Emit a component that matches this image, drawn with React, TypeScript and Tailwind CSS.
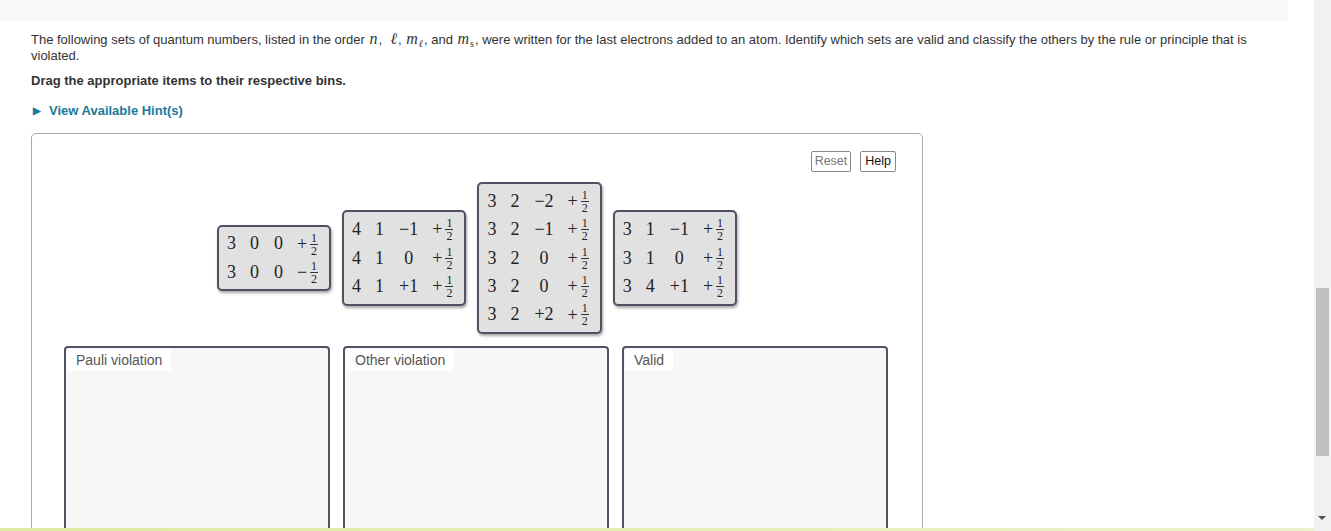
import React from 'react';

type Row = [string, string, string, string];

const TILES: Row[][] = [
  [
    ['3', '0', '0', '+'],
    ['3', '0', '0', '−'],
  ],
  [
    ['4', '1', '−1', '+'],
    ['4', '1', '0', '+'],
    ['4', '1', '+1', '+'],
  ],
  [
    ['3', '2', '−2', '+'],
    ['3', '2', '−1', '+'],
    ['3', '2', '0', '+'],
    ['3', '2', '0', '+'],
    ['3', '2', '+2', '+'],
  ],
  [
    ['3', '1', '−1', '+'],
    ['3', '1', '0', '+'],
    ['3', '4', '+1', '+'],
  ],
];

const BINS = ['Pauli violation', 'Other violation', 'Valid'];

const Half: React.FC = () => (
  <span className="inline-flex flex-col items-center align-middle text-[12px] leading-[11px] ml-[3px]">
    <span className="border-b border-[#333] px-[1px]">1</span>
    <span className="px-[1px] pt-[1px]">2</span>
  </span>
);

const Tile: React.FC<{ rows: Row[] }> = ({ rows }) => (
  <div className="bg-[#e1e1e1] border-2 border-[#4f5264] rounded-[5px] shadow-[1px_2px_3px_rgba(0,0,0,0.35)] px-[3px] py-[3px]">
    <table className="border-collapse font-['Liberation_Serif',serif] text-[18px] text-[#222]">
      <tbody>
        {rows.map((r, i) => (
          <tr key={i} className="h-[27px]">
            <td className="pl-[5px] pr-[7px] text-center">{r[0]}</td>
            <td className="px-[7px] text-center">{r[1]}</td>
            <td className="px-[8px] text-center">{r[2]}</td>
            <td className="pl-[6px] pr-[8px] whitespace-nowrap">
              <span className="align-middle">{r[3]}</span>
              <Half />
            </td>
          </tr>
        ))}
      </tbody>
    </table>
  </div>
);

const M: React.FC<{ children: React.ReactNode }> = ({ children }) => (
  <span className="font-['Liberation_Serif',serif] italic text-[16px] mx-[1px]">{children}</span>
);

export default function App() {
  return (
    <div className="relative flex h-[531px] overflow-hidden bg-white font-['Liberation_Sans',Arial,sans-serif]">
      <div className="w-[1314px] shrink-0">
        <div className="h-[21px] w-[1288px] bg-[#f8f8f8]" />
        <div className="px-[31px] pt-[10px] text-[13px] text-[#333]">
          <p className="leading-[16px] w-[1230px]">
            The following sets of quantum numbers, listed in the order <M>n</M>,&nbsp; <M>ℓ</M>,{' '}
            <M>
              m<sub className="text-[10px] ml-[1px]">ℓ</sub>
            </M>
            , and{' '}
            <M>
              m<sub className="text-[10px] not-italic ml-[1px]">s</sub>
            </M>
            , were written for the last electrons added to an atom. Identify which sets are valid and classify the
            others by the rule or principle that is violated.
          </p>
          <p className="mt-[9px] font-bold leading-[16px]">Drag the appropriate items to their respective bins.</p>
          <div className="mt-[14px] flex items-center gap-[8px] font-bold text-[#1a7a9b] leading-[16px]">
            <span className="text-[10px] pl-[2px]">▶</span>
            <span>View Available Hint(s)</span>
          </div>

          {/* drag and drop panel */}
          <div className="mt-[14px] w-[892px] h-[600px] border border-[#aaa] rounded-[5px] pt-[17px]">
            <div className="flex justify-end gap-[9px] pr-[26px]">
              <button className="h-[21px] px-[3px] border border-[#888] rounded-[2px] text-[12.5px] text-[#777] bg-white">
                Reset
              </button>
              <button className="h-[21px] px-[4px] border border-[#888] rounded-[2px] text-[12.5px] text-[#111] bg-white">
                Help
              </button>
            </div>

            <div className="mt-[13px] flex items-center justify-center gap-[11px] h-[146px]">
              {TILES.map((t, i) => (
                <Tile key={i} rows={t} />
              ))}
            </div>

            <div className="mt-[15px] flex gap-[13px] pl-[32px]">
              {BINS.map((b) => (
                <div
                  key={b}
                  className="w-[266px] h-[300px] border-2 border-[#505366] rounded-[4px] bg-[#f7f7f7] p-[1px]"
                >
                  <span className="inline-block bg-white px-[9px] h-[22px] leading-[22px] text-[14px] text-[#555]">
                    {b}
                  </span>
                </div>
              ))}
            </div>
          </div>
        </div>
      </div>

      {/* scrollbar */}
      <div className="relative w-[17px] shrink-0 bg-[#f1f1f1]">
        <div className="absolute left-[2px] right-[2px] top-[288px] h-[168px] bg-[#c1c1c1]" />
        <div className="absolute left-[4px] top-[516px] w-0 h-0 border-l-[4px] border-r-[4px] border-t-[4px] border-l-transparent border-r-transparent border-t-[#505050]" />
      </div>

      <div className="absolute left-0 bottom-0 h-[3px] w-[1314px] bg-gradient-to-r from-[#dfeaa2] via-[#e6eeb4] to-[#eef2cc]" />
    </div>
  );
}
